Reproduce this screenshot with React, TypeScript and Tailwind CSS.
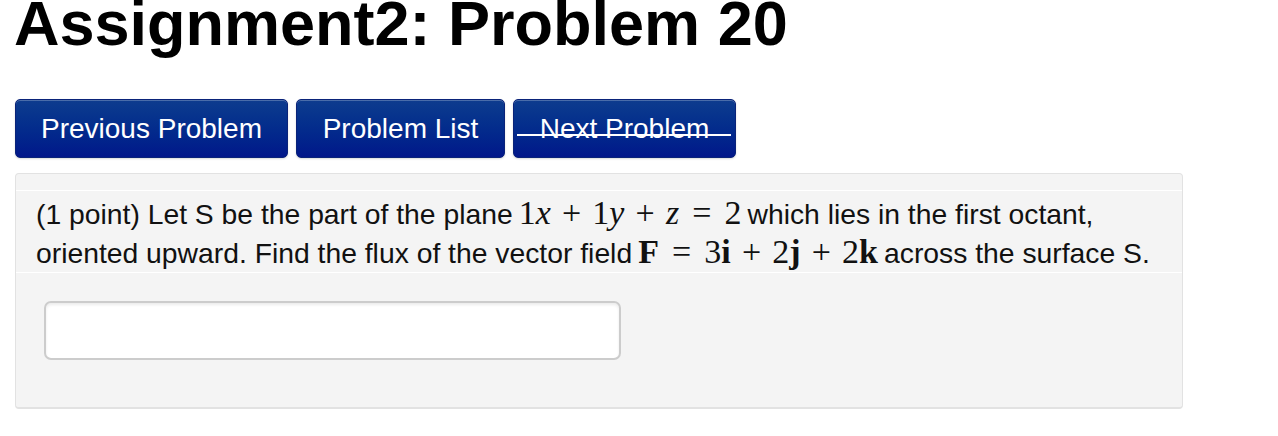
import React from "react";

const Op = ({ c, eq }: { c: string; eq?: boolean }) => (
  <span
    className={
      eq
        ? "inline-block w-[0.778em] mx-[0.278em] text-center"
        : "inline-block w-[0.778em] mx-[0.222em] text-center"
    }
  >
    {c}
  </span>
);

const MathSpan = ({ children }: { children: React.ReactNode }) => (
  <span className="font-['Liberation_Serif','Times_New_Roman',serif] text-[34px] mx-[6px]">
    {children}
  </span>
);

const Btn = ({
  label,
  w,
  strike,
}: {
  label: string;
  w: string;
  strike?: boolean;
}) => (
  <div
    className={`${w} relative h-[59px] flex items-center justify-center rounded-[5px] border border-[#0a2379] bg-linear-to-b from-[#0e3c8e] to-[#02168a] text-white text-[28px] shadow-[inset_0_1px_0_rgba(255,255,255,0.25),0_1px_2px_rgba(0,0,0,0.15)]`}
  >
    <span className="leading-none">{label}</span>
    {strike && (
      <span className="absolute left-[3px] right-[4px] top-[34px] h-[1.5px] bg-white" />
    )}
  </div>
);

export default function App() {
  return (
    <div className="w-[1278px] h-[436px] overflow-hidden bg-white text-[#111] font-['Liberation_Sans',Arial,sans-serif]">
      <h1 className="-mt-[8px] pl-[14px] text-[63px] leading-[63px] font-bold text-black">
        Assignment2: Problem 20
      </h1>

      <div className="mt-[44px] ml-[15px] flex gap-[8px]">
        <Btn label="Previous Problem" w="w-[273px]" />
        <Btn label="Problem List" w="w-[209px]" />
        <Btn label="Next Problem" w="w-[223px]" strike />
      </div>

      <div className="mt-[15px] ml-[15px] w-[1168px] rounded-[4px] border border-[#e2e2e2] border-b-2 bg-[#f4f4f4] pt-[16px] pb-[47px]">
        <div className="border-y border-white px-[20px] pt-[3px] text-[28.3px] leading-[38px]">
          <div className="whitespace-nowrap">
            (1 point) Let S be the part of the plane
            <MathSpan>
              1<i>x</i>
              <Op c="+" />1<i>y</i>
              <Op c="+" />
              <i>z</i>
              <Op c="=" eq />2
            </MathSpan>
            which lies in the first octant,
          </div>
          <div className="whitespace-nowrap">
            oriented upward. Find the flux of the vector field
            <MathSpan>
              <b>F</b>
              <Op c="=" eq />3<b>i</b>
              <Op c="+" />2<b>j</b>
              <Op c="+" />2<b>k</b>
            </MathSpan>
            across the surface S.
          </div>
        </div>

        <div className="mt-[28px] ml-[28px] w-[577px] h-[59px] rounded-[7px] border-2 border-[#cccccc] bg-white shadow-[inset_0_2px_3px_rgba(0,0,0,0.08)]" />
      </div>
    </div>
  );
}
